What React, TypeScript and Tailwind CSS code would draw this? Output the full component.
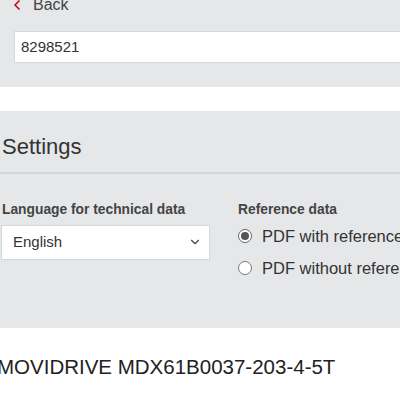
import { ChevronDown, ChevronLeft } from "lucide-react"

export default function App() {
  return (
    <div className="h-[400px] w-[400px] overflow-hidden bg-white text-[#333] [font-family:'Liberation_Sans',Arial,sans-serif]">
      <div className="-mt-[3px] bg-[#e6e7e9] pb-[24px] pl-[14px]">
        <div className="-ml-[5px] flex h-[16px] items-center gap-[8px] text-[16px] leading-none text-[#444]">
          <ChevronLeft className="h-[16px] w-[16px] text-[#d0021b]" strokeWidth={2.5} />
          <span>Back</span>
        </div>
        <div className="mt-[18px] flex h-[32px] w-[400px] items-center border border-[#d6d7d9] bg-white pl-[6px] text-[15px]">
          8298521
        </div>
      </div>
      <div className="h-[24px] bg-white" />
      <div className="h-[217px] bg-[#e6e7e9]">
        <div className="flex h-[63px] items-end border-b-2 border-[#d4d5d7] pb-[14px] pl-[2px] text-[22px] leading-none text-[#333]">
          Settings
        </div>
        <div className="flex pt-[29px]">
          <div className="w-[236px] shrink-0 pl-[1px]">
            <div className="pl-[1px] text-[13.8px] font-bold leading-none text-[#444]">Language for technical data</div>
            <div className="mt-[8px] flex h-[35px] w-[209px] items-center justify-between border border-[#d6d7d9] bg-white pl-[11px] pr-[7px] text-[15px]">
              <span>English</span>
              <ChevronDown className="h-[14px] w-[14px] text-[#444]" strokeWidth={2} />
            </div>
          </div>
          <div className="pl-[2px]">
            <div className="text-[13.8px] font-bold leading-none text-[#444]">Reference data</div>
            <div className="mt-[11px] flex h-[16px] items-center gap-[10px] whitespace-nowrap text-[16.5px] leading-none">
              <span className="flex h-[14px] w-[14px] shrink-0 items-center justify-center rounded-full border border-[#666] bg-white">
                <span className="h-[8px] w-[8px] rounded-full bg-[#555]" />
              </span>
              PDF with reference data
            </div>
            <div className="mt-[16px] flex h-[16px] items-center gap-[10px] whitespace-nowrap text-[16.5px] leading-none">
              <span className="h-[14px] w-[14px] shrink-0 rounded-full border border-[#777] bg-white" />
              PDF without reference data
            </div>
          </div>
        </div>
      </div>
      <div className="-ml-[3px] pt-[29px] text-[20.5px] leading-none whitespace-nowrap text-[#222]">
        MOVIDRIVE MDX61B0037-203-4-5T
      </div>
    </div>
  )
}
